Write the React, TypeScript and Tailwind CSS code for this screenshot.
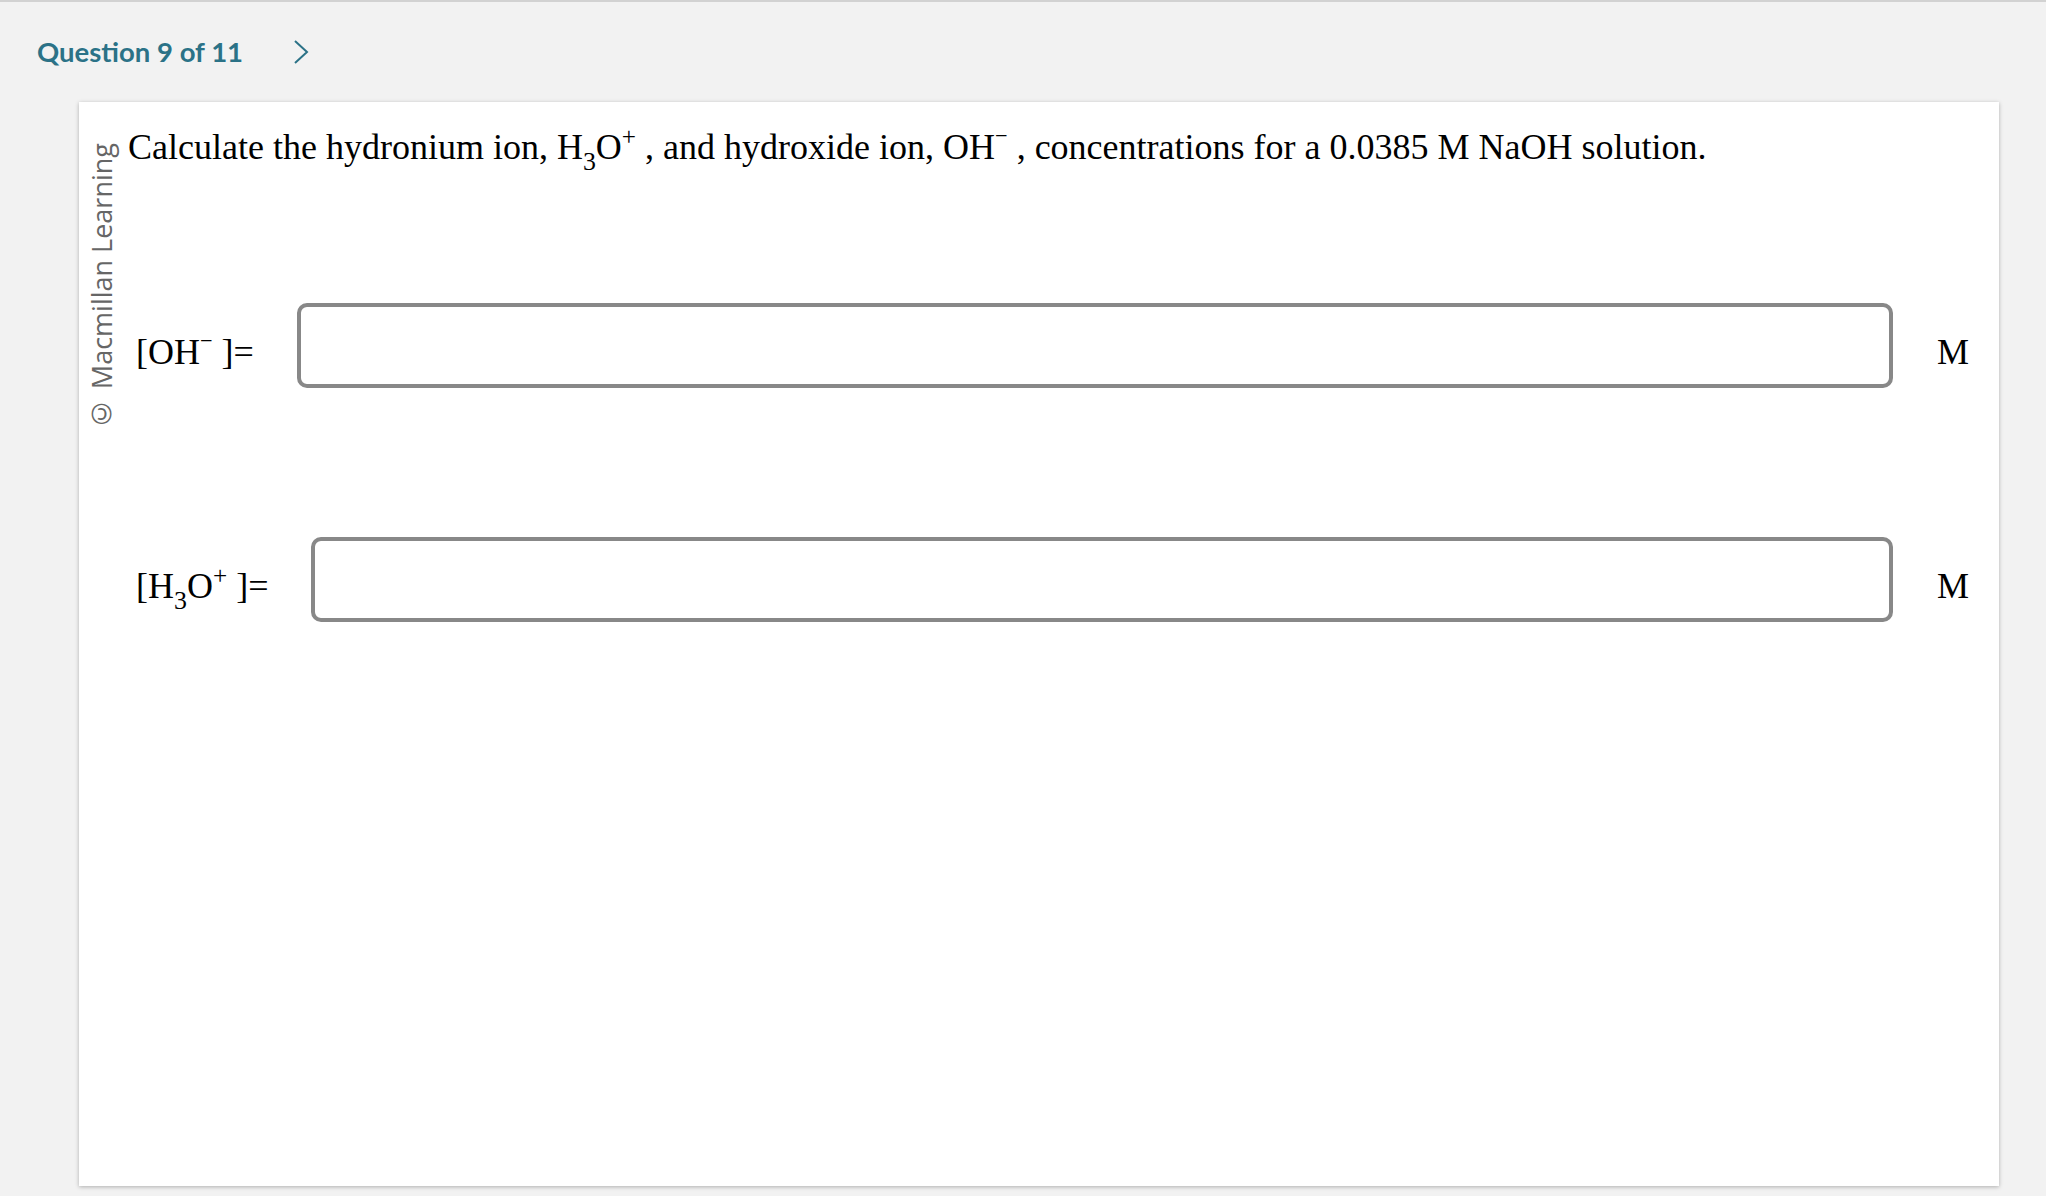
export default function App() {
  const question = {
    current: 9,
    total: 11,
  };

  const sup = "align-baseline relative";

  const rows = [
    {
      id: "oh",
      label: (
        <>
          [OH<sup className={sup + " text-[0.62em] top-[-0.72em]"}>−</sup> ]=
        </>
      ),
    },
    {
      id: "h3o",
      label: (
        <>
          [H<sub className="text-[0.72em] relative top-[0.1em] align-sub">3</sub>O
          <sup className={sup + " text-[0.7em] top-[-0.55em]"}>+</sup> ]=
        </>
      ),
    },
  ];

  return (
    <div className="min-h-[1196px] w-full bg-[#f2f2f2] border-t-2 border-[#d2d2d2] pb-[10px]">
      <header className="h-[100px] flex items-center pl-[37px] gap-[50px]">
        <h1 className="font-['Lato',sans-serif] font-bold text-[27.5px] text-[#2b7287]">
          Question {question.current} of {question.total}
        </h1>
        <svg width="16" height="24" viewBox="0 0 16 24" className="text-[#2b7287]">
          <polyline points="2,1 14,12 2,23" fill="none" stroke="currentColor" strokeWidth="2" />
        </svg>
      </header>

      <main className="ml-[79px] w-[1920px] h-[1084px] bg-white shadow-[0_1px_4px_rgba(0,0,0,0.28)] flex pr-[30px]">
        <div className="w-[28px] ml-[9px] mt-[41px] self-start flex justify-start">
          <span className="[writing-mode:vertical-rl] rotate-180 font-['Open_Sans',sans-serif] text-[27px] leading-[28px] text-[#666666] whitespace-nowrap">
            © Macmillan Learning
          </span>
        </div>

        <div className="flex-1 pl-[12px] pt-[25px] font-['Liberation_Serif',serif] text-black">
          <p className="text-[36px] leading-[40px]">
            Calculate the hydronium ion, H<sub className="text-[0.72em] relative top-[0.1em] align-sub">3</sub>O
            <sup className={sup + " text-[0.7em] top-[-0.55em]"}>+</sup> , and hydroxide ion, OH
            <sup className={sup + " text-[0.62em] top-[-0.72em]"}>−</sup> , concentrations for a 0.0385 M NaOH solution.
          </p>

          <div className="mt-[136px] flex flex-col gap-[149px] pl-[8px]">
            {rows.map((row) => (
              <div key={row.id} className="flex items-center gap-[43px]">
                <span className="text-[36px] leading-[40px] pt-[13px] whitespace-nowrap">{row.label}</span>
                <input
                  type="text"
                  className="flex-1 h-[85px] border-4 border-[#888888] rounded-[10px] bg-white outline-none px-4 text-[30px]"
                />
                <span className="text-[36px] leading-[40px] pt-[13px] ml-px">M</span>
              </div>
            ))}
          </div>
        </div>
      </main>
    </div>
  );
}
